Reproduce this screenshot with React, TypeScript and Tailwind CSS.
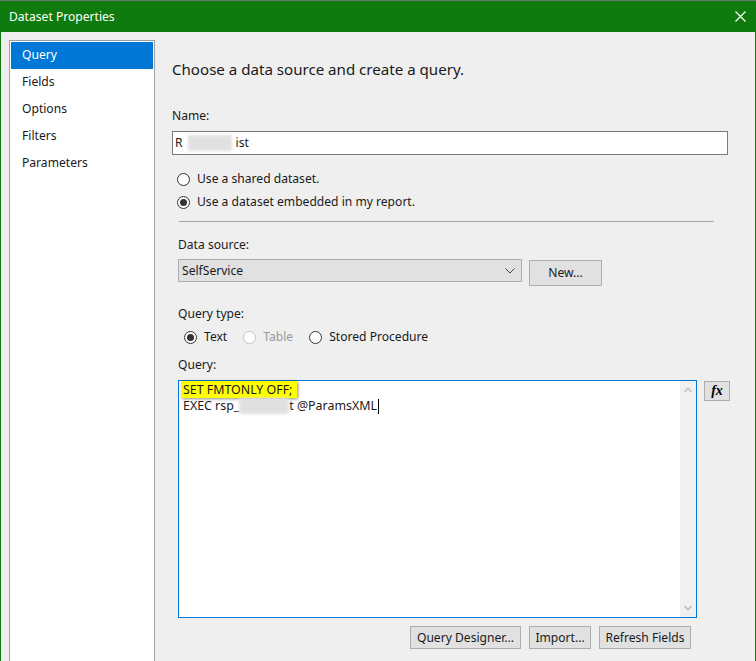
import React from 'react';

const navItems = ['Query', 'Fields', 'Options', 'Filters', 'Parameters'];

const Radio = ({ checked, disabled, label }: { checked?: boolean; disabled?: boolean; label: string }) => (
  <label className={`flex items-center gap-[7px] ${disabled ? 'text-[#9a9a9a]' : 'text-[#1a1a1a]'}`}>
    <span
      className={`flex h-[13px] w-[13px] items-center justify-center rounded-full border bg-white ${
        disabled ? 'border-[#c4c4c4]' : 'border-[#333333]'
      }`}
    >
      {checked && <span className="h-[7px] w-[7px] rounded-full bg-[#333333]" />}
    </span>
    <span>{label}</span>
  </label>
);

const Button = ({ label, className }: { label: string; className: string }) => (
  <button className={`flex h-[23px] items-center justify-center border border-[#adadad] bg-[#e1e1e1] text-[#1a1a1a] ${className}`}>
    {label}
  </button>
);

const Smudge = ({ className }: { className: string }) => (
  <span className={`inline-block h-[16px] bg-[#e0e0e0] align-middle blur-[1.5px] ${className}`} />
);

export default function App() {
  return (
    <div className="flex h-[661px] w-[756px] flex-col overflow-hidden border-t border-[#6b7a6b] bg-[#0f7b0f] font-['Noto_Sans','Open_Sans',sans-serif] text-[12.1px] leading-[16px] text-[#1a1a1a]">
      {/* Title bar */}
      <header className="flex h-[31px] shrink-0 items-center justify-between pl-[9px] pr-[10px] text-white">
        <span>Dataset Properties</span>
        <svg width="11" height="11" viewBox="0 0 11 11" className="stroke-white" strokeWidth="1.2" aria-hidden="true">
          <path d="M0.5 0.5 L10.5 10.5 M10.5 0.5 L0.5 10.5" />
        </svg>
      </header>

      <div className="mx-px flex min-h-0 flex-1 bg-[#efefef] pl-2 pt-2">
        {/* Sidebar */}
        <nav className="w-[146px] shrink-0 border border-b-0 border-[#a0a0a0] bg-white p-px">
          {navItems.map((item, i) => (
            <div
              key={item}
              className={`flex h-[27px] items-center pb-[2px] pl-[11px] ${i === 0 ? 'bg-[#0078d7] text-white' : 'text-[#1a1a1a]'}`}
            >
              {item}
            </div>
          ))}
        </nav>

        {/* Main panel */}
        <main className="flex min-w-0 flex-1 flex-col pl-[17px] pr-[27px]">
          <h1 className="mt-[17px] text-[15.1px] leading-[24px]">Choose a data source and create a query.</h1>

          <div className="mt-[27px]">Name:</div>
          <div className="mt-[7px] flex h-[24px] items-center border border-[#7a7a7a] bg-white pl-[2px]">
            R<Smudge className="ml-[5px] mr-[4px] w-[44px]" />ist
          </div>

          <div className="ml-[5px] mt-[16px] flex flex-col gap-[7px]">
            <Radio label="Use a shared dataset." />
            <Radio checked label="Use a dataset embedded in my report." />
          </div>

          <div className="ml-[7px] mr-[14px] mt-[11px] h-px bg-[#a8a8a8]" />

          <div className="ml-[6px] mt-[15px]">Data source:</div>
          <div className="ml-[6px] mt-[6px] flex items-start gap-[7px]">
            <div className="flex h-[23px] w-[344px] items-center justify-between border border-[#adadad] bg-[#e1e1e1] pl-[3px] pr-[6px]">
              <span>SelfService</span>
              <svg width="10" height="6" viewBox="0 0 10 6" fill="none" stroke="#444444" aria-hidden="true">
                <path d="M0.5 0.5 L5 5 L9.5 0.5" />
              </svg>
            </div>
            <Button label="New..." className="mt-px !h-[26px] w-[73px]" />
          </div>

          <div className="ml-[6px] mt-[20px]">Query type:</div>
          <div className="ml-[12px] mt-[7px] flex gap-[16px]">
            <Radio checked label="Text" />
            <Radio disabled label="Table" />
            <Radio label="Stored Procedure" />
          </div>

          <div className="ml-[6px] mt-[12px]">Query:</div>
          <div className="ml-[6px] mt-[7px] flex items-start gap-[7px]">
            <div className="flex h-[238px] w-[519px] shrink-0 border border-[#0078d7] bg-white">
              <div className="min-w-0 flex-1 pl-[2px] text-[12.4px]">
                <div className="w-fit bg-[#ffff00] pl-[2px] pr-[5px] leading-[17px] shadow-[1px_1px_3px_rgba(0,0,0,0.45)]">
                  SET FMTONLY OFF;
                </div>
                <div className="flex h-[16px] items-center pl-[2px]">
                  <span>EXEC rsp_</span>
                  <Smudge className="w-[50px]" />
                  <span>t @ParamsXML</span>
                  <span className="ml-px h-[15px] w-px bg-black" />
                </div>
              </div>
              <div className="flex w-[16px] flex-col items-center justify-between bg-[#f0f0f0] py-[6px]">
                <svg width="8" height="6" viewBox="0 0 8 6" fill="none" stroke="#c0c0c0" strokeWidth="1.6" aria-hidden="true">
                  <path d="M0.5 5 L4 1.5 L7.5 5" />
                </svg>
                <svg width="8" height="6" viewBox="0 0 8 6" fill="none" stroke="#c0c0c0" strokeWidth="1.6" aria-hidden="true">
                  <path d="M0.5 1 L4 4.5 L7.5 1" />
                </svg>
              </div>
            </div>
            <button className="mt-px flex h-[20px] w-[26px] shrink-0 items-center justify-center border border-[#adadad] bg-[#e1e1e1] font-['Liberation_Serif',serif] text-[14px] font-bold italic text-black">
              fx
            </button>
          </div>

          <div className="mt-[8px] flex gap-[8px] pl-[238px]">
            <Button label="Query Designer..." className="w-[111px]" />
            <Button label="Import..." className="w-[62px]" />
            <Button label="Refresh Fields" className="w-[92px]" />
          </div>
        </main>
      </div>
    </div>
  );
}
